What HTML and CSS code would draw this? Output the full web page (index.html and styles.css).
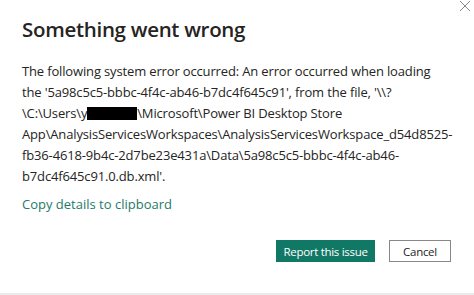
FILE: index.html
```html
<!DOCTYPE html>
<html lang="en">
<head>
    <meta charset="UTF-8">
    <meta name="viewport" content="width=device-width, initial-scale=1.0">
    <title>Something went wrong</title>
    <link rel="stylesheet" href="styles.css">
</head>
<body>
    <div class="dialog">
        <button class="close-btn" aria-label="Close">
            <svg width="12" height="12" viewBox="0 0 12 12">
                <path d="M1 1 L11 11 M11 1 L1 11" stroke="#8a8886" stroke-width="1" fill="none"/>
            </svg>
        </button>

        <h1 class="title">Something went wrong</h1>

        <p class="message">
            The following system error occurred: An error occurred when loading<br>
            the '5a98c5c5-bbbc-4f4c-ab46-b7dc4f645c91', from the file, '\\?<br>
            \C:\Users\y<span class="redacted"></span>\Microsoft\Power BI Desktop Store<br>
            App\AnalysisServicesWorkspaces\AnalysisServicesWorkspace_d54d8525-<br>
            fb36-4618-9b4c-2d7be23e431a\Data\5a98c5c5-bbbc-4f4c-ab46-<br>
            b7dc4f645c91.0.db.xml'.
        </p>

        <a href="#" class="copy-link">Copy details to clipboard</a>

        <div class="actions">
            <button class="btn btn-primary">Report this issue</button>
            <button class="btn btn-default">Cancel</button>
        </div>
    </div>
</body>
</html>
```

FILE: styles.css
```css
:root {
    --primary-color: #117865;
    --link-color: #1f7a69;
    --text-color: #252423;
    --border-color: #8a8886;
}

* {
    box-sizing: border-box;
    margin: 0;
    padding: 0;
}

body {
    font-family: 'Open Sans', 'Noto Sans', sans-serif;
    background-color: white;
    color: var(--text-color);
    width: 474px;
    height: 295px;
    overflow: hidden;
}

.dialog {
    position: relative;
    height: 295px;
    padding: 14px 23px 0 22px;
    border-bottom: 2px solid #ebebeb;
}

.close-btn {
    position: absolute;
    top: 0;
    right: 3px;
    width: 12px;
    height: 12px;
    background: none;
    border: none;
    cursor: pointer;
}

.close-btn svg {
    display: block;
}

.title {
    font-size: 20.5px;
    font-weight: 600;
    line-height: 30px;
    letter-spacing: -0.3px;
    margin-bottom: 17px;
}

.message {
    font-size: 13px;
    line-height: 21px;
    letter-spacing: -0.15px;
}

.redacted {
    display: inline-block;
    width: 50px;
    height: 13px;
    background-color: #000;
    vertical-align: -2px;
}

.copy-link {
    display: inline-block;
    margin-top: 7px;
    font-size: 13px;
    line-height: 21px;
    color: var(--link-color);
    text-decoration: none;
}

.actions {
    display: flex;
    justify-content: flex-end;
    gap: 14px;
    margin-top: 25px;
}

.btn {
    height: 22px;
    font-family: inherit;
    font-size: 11.5px;
    letter-spacing: -0.3px;
    cursor: pointer;
}

.btn-primary {
    width: 99px;
    background-color: var(--primary-color);
    color: white;
    border: none;
}

.btn-default {
    width: 62px;
    background-color: white;
    color: var(--text-color);
    border: 1px solid var(--border-color);
}
```
